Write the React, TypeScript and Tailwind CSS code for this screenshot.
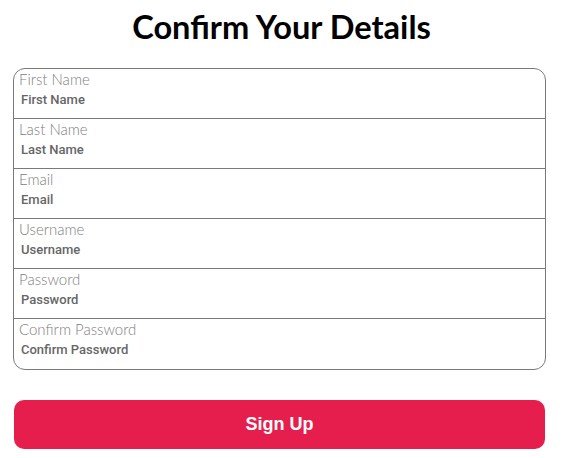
import React from "react";

const fields = ["First Name", "Last Name", "Email", "Username", "Password", "Confirm Password"];

export default function App() {
  return (
    <div className="w-[563px] h-[458px] bg-white px-[13px]">
      <h1 className="text-center text-[32.6px] leading-[38px] font-bold text-black pt-[8px] pb-[22px] font-['Lato',sans-serif]">
        Confirm Your Details
      </h1>
      <div className="w-[533px] border border-[#7a7a7a] rounded-[12px] overflow-hidden">
        {fields.map((f, i) => (
          <div
            key={f}
            className={
              i < fields.length - 1
                ? "h-[50px] flex flex-col pl-[5px] border-b border-[#7a7a7a]"
                : "h-[50px] flex flex-col pl-[5px]"
            }
          >
            <label className="text-[15px] leading-[20px] font-light text-[#808080] font-['Lato',sans-serif]">
              {f}
            </label>
            <input
              placeholder={f}
              className="h-[20px] pl-[2px] text-[13px] font-medium placeholder:text-[#666] text-[#666] outline-none bg-transparent font-['Roboto',sans-serif]"
            />
          </div>
        ))}
      </div>
      <button className="mt-[30px] ml-[1px] w-[531px] h-[49px] rounded-[10px] bg-[#e61e4d] text-white text-[18px] font-bold font-['Liberation_Sans',Arial,sans-serif]">
        Sign Up
      </button>
    </div>
  );
}
